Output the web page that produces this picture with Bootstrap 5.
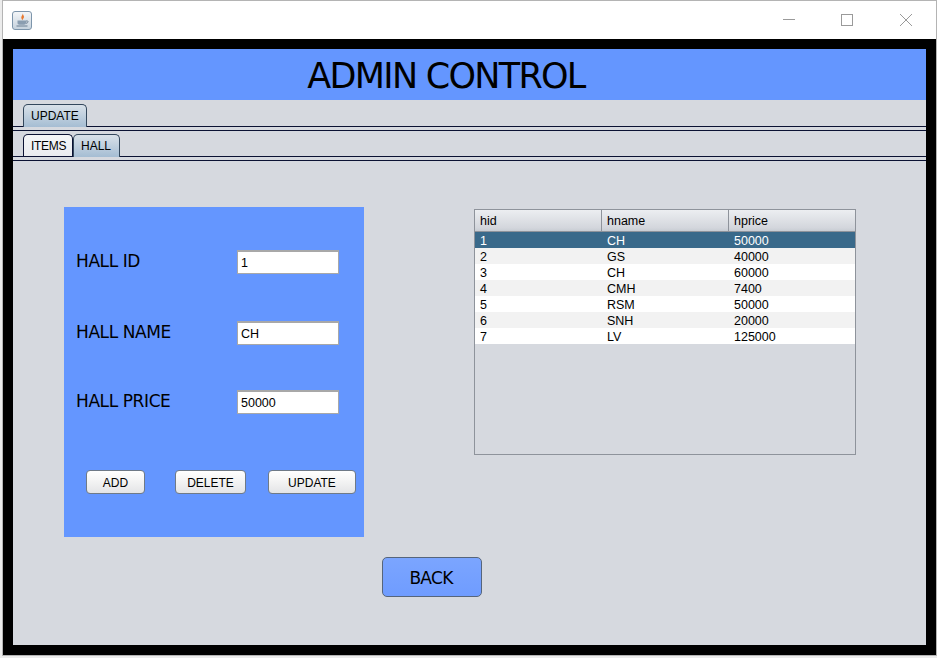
<!DOCTYPE html>
<html lang="en">
<head>
<meta charset="utf-8">
<title>Admin Control</title>
<link href="https://cdn.jsdelivr.net/npm/bootstrap@5.3.0/dist/css/bootstrap.min.css" rel="stylesheet">
<style>
html,body{margin:0;height:658px;overflow:hidden;background:#ececec}
.win{width:935px;height:656px;margin-left:2px;border:1px solid #b4b4b4;background:#fff;display:flex;flex-direction:column}
.titlebar{height:38px;flex:none;display:flex;align-items:center;padding-left:9px}
.javaicon{width:20px;height:19px;border:1px solid #7d95ab;border-radius:3px;background:linear-gradient(#f4f6f8,#c6d2dd);display:flex;align-items:center;justify-content:center}
.winctl{margin-left:auto}
.winctl svg{display:block}
.frame{flex:1;border:10px solid #000;background:#d6d9df;display:flex;flex-direction:column;min-height:0}
.banner{height:51px;flex:none;background:#6496ff;text-align:center;color:#000;font:35px/54px "DejaVu Sans",sans-serif;letter-spacing:-1.72px;margin:0;padding-right:47px}
.jtabs{flex:none;padding:4px 0 0 10px;margin:0;border-bottom:1px solid #0b1233;display:flex;align-items:flex-start;list-style:none;height:27px}
.jtabs.second{height:26px;padding-top:3px}
.jstrip{height:4px;flex:none;border-bottom:1px solid #0b1233}
.jtab{height:22px;border:1px solid #0b1233;border-bottom:0;border-radius:5px 5px 0 0;background:linear-gradient(#f5f6f8,#e9ebef);font:12px/23px "Liberation Sans",sans-serif;color:#000;padding:0 7px;text-decoration:none;display:block}
.jtab.on{background:linear-gradient(#d9e1e9,#a5bdd3);height:23px;position:relative;z-index:1;border-color:#33475c}
.jtab.items{width:50px;letter-spacing:-.3px}
.jtab.hall{width:47px}
.stage{flex:1;display:flex;flex-direction:column;min-height:0;padding:46px 0 0 51px}
.toprow{display:flex;align-items:flex-start}
.hallpanel{width:300px;height:330px;background:#6496ff;padding:0 8px 0 12px;display:flex;flex-direction:column;flex:none}
.fieldrow{height:24px;display:flex;align-items:center;justify-content:space-between;padding-right:17px}
.fieldrow label{font:17px/18px "DejaVu Sans",sans-serif;letter-spacing:-.4px;color:#000;margin:0 0 3px}
.fieldinp{width:102px;height:24px;flex:none;border:1px solid #a8a8a8;border-top:2px solid #a8a8a8;border-radius:0;padding:1px 3px 0;font:12.5px/20px "Liberation Sans",sans-serif;color:#000;background:#fff;min-height:0;box-shadow:none}
.r1{margin-top:43px}.r2{margin-top:47px}.r3{margin-top:45px}
.btnline{display:flex;margin-top:56px;padding-left:10px}
.jbtn{height:24px;border:1px solid #6f7a87;border-radius:4px;background:linear-gradient(#fff,#f4f4f4 45%,#e3e4e6);font:12px/22px "Liberation Sans",sans-serif;color:#000;padding:1px 0 0}
.b1{width:59px}.b2{width:71px;margin-left:30px}.b3{width:88px;margin-left:22px}
.tablebox{width:382px;height:246px;margin:2px 0 0 110px;border:1px solid #8e939b;background:#d6d9df;flex:none}
.tablebox .table{--bs-table-bg:transparent;margin:0;width:380px;table-layout:fixed;border-collapse:separate;border-spacing:0;font:12.5px/14px "Liberation Sans",sans-serif;color:#000}
.tablebox th{height:22px;width:127px;font-weight:400;padding:0 5px;background:linear-gradient(#eceef1,#d3d6dc 85%,#c8ccd3);border:0;border-right:1px solid #8e939b;border-bottom:1px solid #8e939b;line-height:20px;box-shadow:none;color:#000}
.tablebox th:last-child{width:126px;border-right:0}
.tablebox td{height:16px;padding:2px 5px 0;border:0;background:#fff;box-shadow:none;color:#000}
.tablebox tr.alt td{background:#f2f2f2}
.tablebox tr.sel td{background:#39698a;color:#fff}
.backline{padding-left:318px;margin-top:20px}
.backbtn{width:100px;height:40px;border:1px solid #56657b;border-radius:5px;background:linear-gradient(#7ba5ff,#6f9cff);font:17px/38px "DejaVu Sans",sans-serif;letter-spacing:-.7px;color:#000;padding:1px 2px 0 0}
</style>
</head>
<body>
<div class="win">
  <div class="titlebar">
    <div class="javaicon">
      <svg width="16" height="16" viewBox="0 0 16 16"><path d="M8.500 1c1 2-2 3-1 5.500.3 1 .8 1.300 1 2-.1-1.500 2.500-2.700 1-5-.3-.8-.6-1.700-1-2.500z" fill="#e8772e"/><path d="M3.500 8.500h8.500v2.500c0 1.200-1 1.700-2 1.700H5.500c-1 0-2-.5-2-1.700z" fill="#8a9db0"/><path d="M12 9h1.500c.9 0 .9 2-1.500 2.300" fill="none" stroke="#6b7f92"/><path d="M2.500 14h11" stroke="#6b7f92"/></svg>
    </div>
    <div class="winctl">
      <svg width="176" height="38" viewBox="0 0 176 38"><path d="M23 18.500h12" stroke="#9a9a9a"/><rect x="81.500" y="13.500" width="11" height="11" fill="none" stroke="#9a9a9a"/><path d="M140 13l12 12M152 13l-12 12" stroke="#9a9a9a"/></svg>
    </div>
  </div>
  <div class="frame">
    <h1 class="banner">ADMIN CONTROL</h1>
    <ul class="jtabs"><li><a class="jtab on" href="#">UPDATE</a></li></ul>
    <div class="jstrip"></div>
    <ul class="jtabs second"><li><a class="jtab items" href="#">ITEMS</a></li><li><a class="jtab on hall" href="#">HALL</a></li></ul>
    <div class="jstrip"></div>
    <div class="stage">
      <div class="toprow">
        <form class="hallpanel">
          <div class="fieldrow r1"><label>HALL ID</label><input class="form-control fieldinp" value="1"></div>
          <div class="fieldrow r2"><label>HALL NAME</label><input class="form-control fieldinp" value="CH"></div>
          <div class="fieldrow r3"><label>HALL PRICE</label><input class="form-control fieldinp" value="50000"></div>
          <div class="btnline">
            <button type="button" class="btn jbtn b1">ADD</button>
            <button type="button" class="btn jbtn b2">DELETE</button>
            <button type="button" class="btn jbtn b3">UPDATE</button>
          </div>
        </form>
        <div class="tablebox">
          <table class="table">
            <thead><tr><th>hid</th><th>hname</th><th>hprice</th></tr></thead>
            <tbody>
              <tr class="sel"><td>1</td><td>CH</td><td>50000</td></tr>
              <tr class="alt"><td>2</td><td>GS</td><td>40000</td></tr>
              <tr><td>3</td><td>CH</td><td>60000</td></tr>
              <tr class="alt"><td>4</td><td>CMH</td><td>7400</td></tr>
              <tr><td>5</td><td>RSM</td><td>50000</td></tr>
              <tr class="alt"><td>6</td><td>SNH</td><td>20000</td></tr>
              <tr><td>7</td><td>LV</td><td>125000</td></tr>
            </tbody>
          </table>
        </div>
      </div>
      <div class="backline"><button type="button" class="btn backbtn">BACK</button></div>
    </div>
  </div>
</div>
<script src="https://cdn.jsdelivr.net/npm/bootstrap@5.3.0/dist/js/bootstrap.bundle.min.js"></script>
</body>
</html>
